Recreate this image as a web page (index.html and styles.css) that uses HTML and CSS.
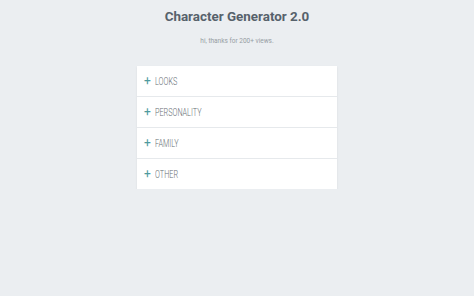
FILE: index.html
```html
<!DOCTYPE html>
<html lang="en">
<head>
    <meta charset="UTF-8">
    <meta name="viewport" content="width=device-width, initial-scale=1.0">
    <title>Character Generator 2.0</title>
    <link rel="stylesheet" href="styles.css">
</head>
<body>
    <div class="page">
        <h1>Character Generator 2.0</h1>
        <p class="subtitle">hi, thanks for 200+ views.</p>

        <div class="sections">
            <div class="section"><span class="plus">+</span><span class="label">LOOKS</span></div>
            <div class="section"><span class="plus">+</span><span class="label">PERSONALITY</span></div>
            <div class="section"><span class="plus">+</span><span class="label">FAMILY</span></div>
            <div class="section"><span class="plus">+</span><span class="label">OTHER</span></div>
        </div>
    </div>
</body>
</html>
```

FILE: styles.css
```css
body {
    margin: 0;
    background: #ebeef1;
    font-family: Roboto, "Liberation Sans", sans-serif;
}

.page {
    display: flex;
    flex-direction: column;
    align-items: center;
    padding-top: 8px;
}

h1 {
    margin: 0;
    font-size: 13.4px;
    font-weight: 700;
    color: #56616b;
    line-height: 18px;
}

.subtitle {
    margin: 11px 0 0;
    font-size: 6.5px;
    line-height: 9px;
    color: #969da3;
}

.sections {
    margin-top: 20px;
    width: 200px;
    background: white;
    box-shadow: 0 1px 2px rgba(0,0,0,0.08);
}

.section {
    display: flex;
    align-items: center;
    height: 30px;
    padding-left: 7px;
    border-bottom: 1px solid #e6e9ec;
}

.section:last-child {
    border-bottom: none;
}

.plus {
    font-size: 12px;
    color: #4e9a9e;
    width: 11px;
    line-height: 1;
}

.label {
    display: inline-block;
    font-size: 11.5px;
    font-weight: 300;
    color: #656d73;
    transform: scaleX(0.63);
    transform-origin: left center;
}
```
